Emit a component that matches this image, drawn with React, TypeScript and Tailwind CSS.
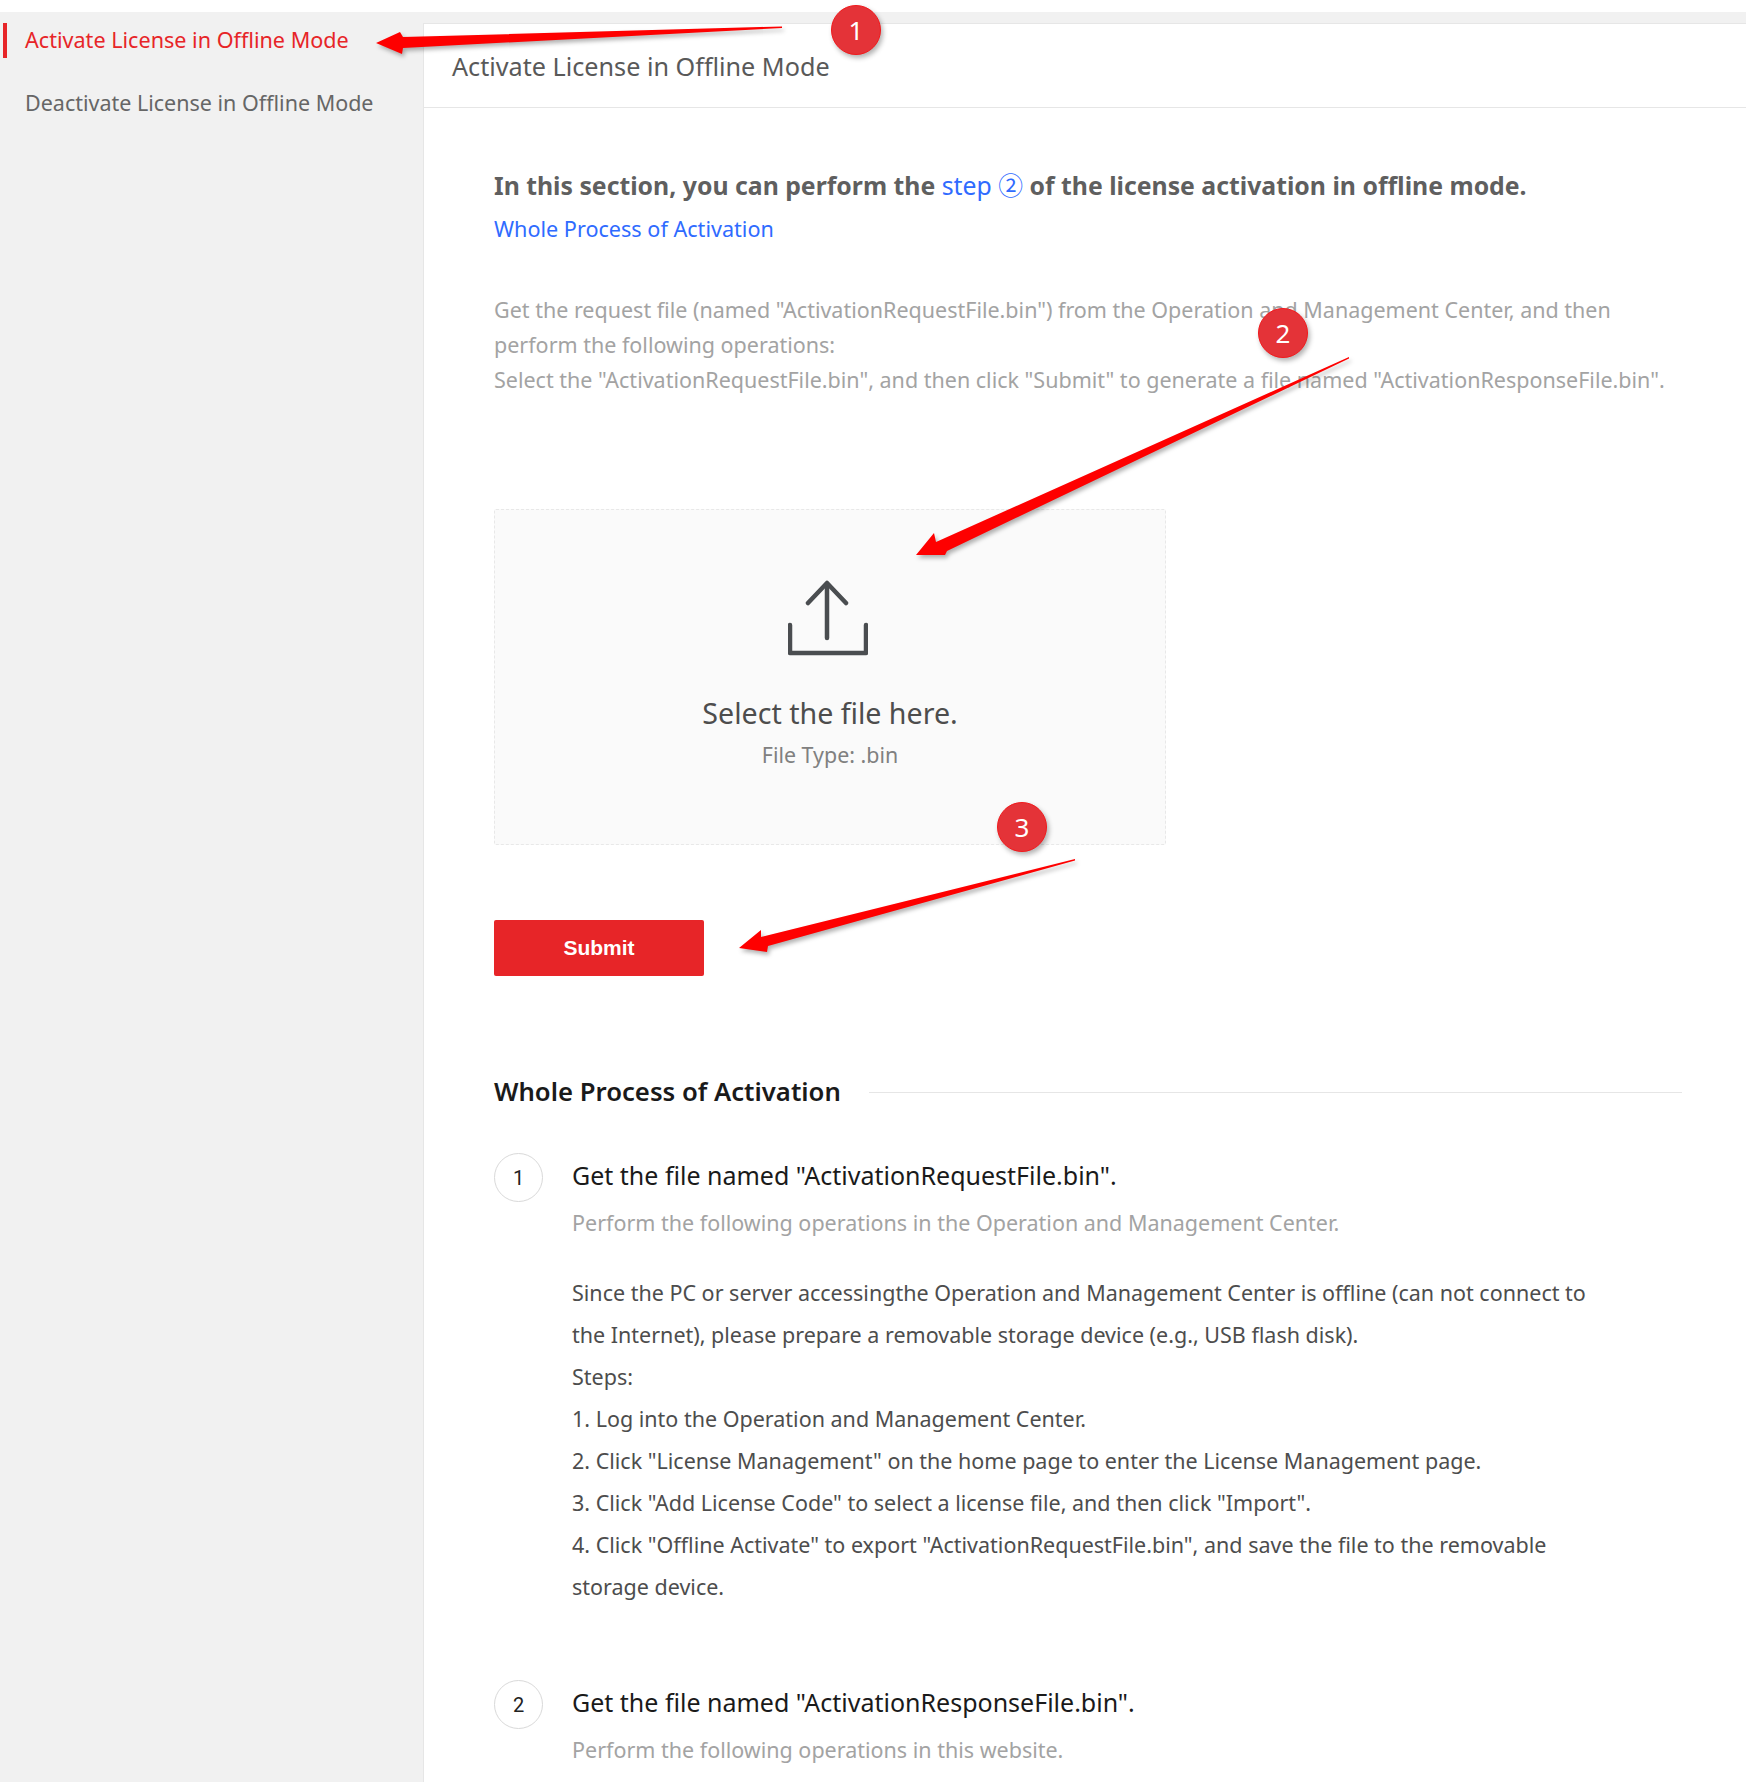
const Badge = ({ n, className }: { n: number; className: string }) => (
  <div className={`absolute w-[50px] h-[50px] rounded-full bg-[#e43338] border border-[#f2191c] shadow-[2px_3px_5px_rgba(0,0,0,0.3)] flex items-center justify-center text-white text-[26px] font-['Noto_Sans',sans-serif] ${className}`}>
    {n}
  </div>
);

// the three red callout arrows that lie over the page
const Arrows = () => (
  <svg className="absolute inset-0 pointer-events-none drop-shadow-[2px_3px_2px_rgba(0,0,0,0.3)]" width="1746" height="1786" viewBox="0 0 1746 1786" fill="#fe0000">
    <polygon points="782,26.5 403,37 400,32 376,43 402,54 403,48 782,28" />
    <polygon points="1349,357 936,542 934,533 916,555 945,555 947,551 1349,358.5" />
    <polygon points="1075,859 761,937 761,930 739,948 767,952 768,946 1075,860.5" />
  </svg>
);

const UploadIcon = () => (
  <svg width="80" height="77" viewBox="0 0 80 77" fill="none" stroke="#4a4d50" strokeWidth="4.5" strokeLinecap="round" strokeLinejoin="round" className="mr-[4px]">
    <path d="M39 58V4" />
    <path d="M20 23L39 3L58 23" />
    <path d="M2 45V73H78V45" />
  </svg>
);

const StepCircle = ({ n }: { n: number }) => (
  <div className="w-[49px] h-[49px] shrink-0 rounded-full border border-[#d9d9d9] flex items-center justify-center text-[20px] text-[#222] font-['Roboto',sans-serif]">
    {n}
  </div>
);

export default function App() {
  return (
    <div className="relative w-[1746px] h-[1786px] bg-white pt-[12px] overflow-hidden font-['Noto_Sans',sans-serif]">
      <div className="flex h-[1770px] bg-[#f1f1f1]">
        <aside className="w-[423px] shrink-0 pt-[11px]">
          <div className="flex items-center h-[35px] ml-[3px] pl-[18px] border-l-[4px] border-[#e72528] text-[#e72528] text-[21.6px] whitespace-nowrap">
            Activate License in Offline Mode
          </div>
          <div className="flex items-center h-[35px] mt-[28px] pl-[25px] text-[#666] text-[21.5px] whitespace-nowrap">
            Deactivate License in Offline Mode
          </div>
        </aside>

        <main className="flex-1 mt-[11px] bg-white border-l border-t border-[#e6e6e6]">
          <div className="h-[84px] border-b border-[#e6e6e6] pl-[28px] pt-[22px] text-[25.2px] leading-[40px] text-[#595959] whitespace-nowrap">
            Activate License in Offline Mode
          </div>

          <div className="pl-[70px] pt-[57px]">
            <h1 className="h-[40px] text-[24.8px] leading-[40px] font-bold text-[#5f5f5f] whitespace-nowrap">
              In this section, you can perform the <span className="font-normal text-[#2f6bff]">step <span className="leading-none font-['Noto_Sans_CJK_SC',sans-serif]">②</span></span> of the license activation in offline mode.
            </h1>
            <a className="block mt-[8px] text-[21.6px] leading-[32px] text-[#2f6bff]">Whole Process of Activation</a>

            <p className="mt-[47px] text-[21.5px] leading-[35px] text-[#a3a3a3] whitespace-nowrap">
              Get the request file (named "ActivationRequestFile.bin") from the Operation and Management Center, and then<br />
              perform the following operations:<br />
              Select the "ActivationRequestFile.bin", and then click "Submit" to generate a file named "ActivationResponseFile.bin".
            </p>

            <div className="mt-[112px] w-[672px] h-[336px] bg-[#fafafa] border border-dashed border-[#e8e8e8] rounded-[2px] flex flex-col items-center pt-[70px]">
              <UploadIcon />
              <div className="mt-[36px] text-[28.6px] leading-[40px] text-[#4d4d4d]">Select the file here.</div>
              <div className="mt-[7px] text-[21.4px] leading-[30px] text-[#808080]">File Type: .bin</div>
            </div>

            <button className="block mt-[75px] w-[210px] h-[56px] bg-[#e72528] rounded-[2px] text-white text-[21px] font-bold font-['Liberation_Sans',sans-serif]">
              Submit
            </button>

            <div className="mt-[96px] flex items-center pr-[64px]">
              <h2 className="text-[25.7px] leading-[40px] font-semibold text-[#1a1a1a] whitespace-nowrap">Whole Process of Activation</h2>
              <div className="flex-1 ml-[28px] h-px bg-[#e6e6e6]" />
            </div>

            <div className="mt-[41px] flex gap-[29px]">
              <StepCircle n={1} />
              <div className="pt-[2px]">
                <h3 className="text-[25px] leading-[40px] text-[#1a1a1a]">Get the file named "ActivationRequestFile.bin".</h3>
                <p className="mt-[12px] text-[21.5px] leading-[32px] text-[#a3a3a3]">Perform the following operations in the Operation and Management Center.</p>
                <div className="mt-[33px] text-[21.5px] leading-[42px] text-[#4d4d4d] whitespace-nowrap">
                  Since the PC or server accessingthe Operation and Management Center is offline (can not connect to<br />
                  the Internet), please prepare a removable storage device (e.g., USB flash disk).<br />
                  Steps:<br />
                  1. Log into the Operation and Management Center.<br />
                  2. Click "License Management" on the home page to enter the License Management page.<br />
                  3. Click "Add License Code" to select a license file, and then click "Import".<br />
                  4. Click "Offline Activate" to export "ActivationRequestFile.bin", and save the file to the removable<br />
                  storage device.
                </div>
              </div>
            </div>

            <div className="mt-[72px] flex gap-[29px]">
              <StepCircle n={2} />
              <div className="pt-[2px]">
                <h3 className="text-[25px] leading-[40px] text-[#1a1a1a]">Get the file named "ActivationResponseFile.bin".</h3>
                <p className="mt-[12px] text-[21.5px] leading-[32px] text-[#a3a3a3]">Perform the following operations in this website.</p>
              </div>
            </div>
          </div>
        </main>
      </div>

      <Arrows />
      <Badge n={1} className="left-[831px] top-[5px]" />
      <Badge n={2} className="left-[1258px] top-[308px]" />
      <Badge n={3} className="left-[997px] top-[802px]" />
    </div>
  );
}
